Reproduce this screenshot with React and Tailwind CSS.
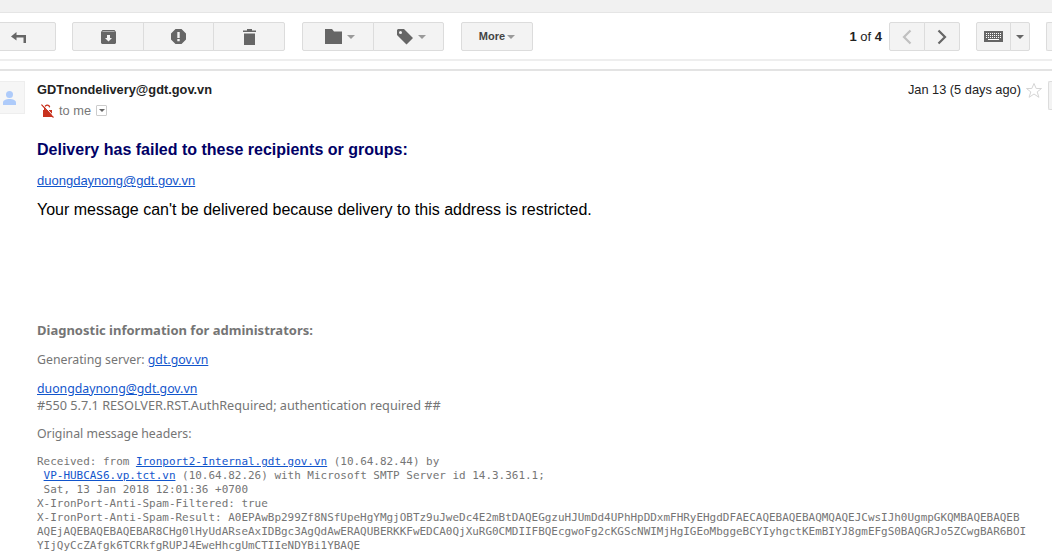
const BTN = 'flex h-[29px] items-center justify-center border border-[#dcdcdc] bg-[#f3f3f3]'
const ICON = '#666666'

function Caret({ color = '#9a9a9a', gap = 'ml-[5px]' }) {
  return <span className={`${gap} h-0 w-0 border-x-[4px] border-t-[4px] border-x-transparent`} style={{ borderTopColor: color }} />
}

function Reply() {
  return (
    <svg width="15" height="12" viewBox="0 0 15 12" fill={ICON}>
      <path d="M0 5.500 5.500 1v3H15v8h-2.500V6.500H5.500v3z" />
    </svg>
  )
}

function Archive() {
  return (
    <svg width="15" height="14" viewBox="0 0 15 14" fill={ICON}>
      <path fillRule="evenodd" d="M1.500 0h12L15 2v11l-1 1H1l-1-1V2zM1.500 2h12v-.6h-12zM6 5v3H4l3.500 3.500L11 8H9V5z" />
    </svg>
  )
}

function Spam() {
  return (
    <svg width="15" height="15" viewBox="0 0 15 15" fill={ICON}>
      <path fillRule="evenodd" d="M4.500 0h6L15 4.500v6L10.500 15h-6L0 10.500v-6zM6.300 3v6h2.400V3zM6.300 10v2.200h2.400V10z" />
    </svg>
  )
}

function Trash() {
  return (
    <svg width="13" height="16" viewBox="0 0 13 16" fill={ICON}>
      <path d="M4 0h5v1.500h4V3H0V1.500h4zM1 4.500h11V16H1z" />
    </svg>
  )
}

function Folder() {
  return (
    <svg width="17" height="15" viewBox="0 0 17 15" fill={ICON}>
      <path d="M0 0h7l2 2.500h8V15H0z" />
    </svg>
  )
}

function Tag() {
  return (
    <svg width="16" height="16" viewBox="0 0 16 16" fill={ICON}>
      <path fillRule="evenodd" d="M1 0h6l9 9-6.500 6.500L0 6V1zM3.500 2A1.500 1.500 0 1 0 3.500 5 1.500 1.500 0 0 0 3.500 2z" />
    </svg>
  )
}

function Keyboard() {
  const keys = []
  for (let y = 2; y <= 6; y += 2) {
    for (let x = 2; x <= 16; x += 2) keys.push(<rect key={`${x}-${y}`} x={x} y={y} width="1" height="1" fill="#fff" />)
  }
  return (
    <svg width="19" height="11" viewBox="0 0 19 11" fill={ICON}>
      <rect width="19" height="11" />
      {keys}
      <rect x="4" y="8" width="11" height="1" fill="#fff" />
    </svg>
  )
}

function Person() {
  return (
    <svg width="13" height="14" viewBox="0 0 13 14" fill="#aecbfa">
      <circle cx="6.500" cy="3.500" r="3.500" />
      <path d="M0 14v-2.500C0 9.500 3 8 6.500 8S13 9.500 13 11.500V14z" />
    </svg>
  )
}

function NoLock() {
  return (
    <svg width="13" height="14" viewBox="0 0 13 14" className="shrink-0">
      <path fill="#c8321f" d="M3 6V3.500a3.300 3.300 0 0 1 6.300-1L8 4V3.500a1.700 1.700 0 0 0-3.400 0V6H11v7H2V6z" />
      <path stroke="#c8321f" strokeWidth="1.200" d="M.5.500 12.500 13.500" />
      <path stroke="#fff" strokeWidth="1" d="M1.500 0 13 12.500" />
    </svg>
  )
}

function Link({ children }) {
  return <a className="text-[#1155cc] underline">{children}</a>
}

export default function App() {
  return (
    <div className="h-[555px] w-[1052px] overflow-hidden bg-white font-['Liberation_Sans',sans-serif]">
      <div className="h-[13px] border-b border-[#e5e5e5] bg-[#f1f1f1]" />

      <div className="flex h-[48px] border-b-2 border-[#eeeeee] pt-[9px]">
        <div className={`${BTN} -ml-[5px] w-[61px] rounded-[2px] pr-[14px]`}><Reply /></div>

        <div className="ml-4 flex">
          <div className={`${BTN} w-[72px] rounded-l-[2px]`}><Archive /></div>
          <div className={`${BTN} -ml-px w-[71px]`}><Spam /></div>
          <div className={`${BTN} -ml-px w-[72px] rounded-r-[2px]`}><Trash /></div>
        </div>

        <div className="ml-[17px] flex">
          <div className={`${BTN} w-[72px] rounded-l-[2px] pl-[4px]`}><Folder /><Caret /></div>
          <div className={`${BTN} -ml-px w-[71px] rounded-r-[2px] pl-[5px]`}><Tag /><Caret /></div>
        </div>

        <div className={`${BTN} ml-[17px] w-[72px] rounded-[2px] text-[11px] font-bold text-[#444444]`}>
          More<Caret gap="ml-[2px]" />
        </div>

        <div className="mr-[7px] ml-auto flex h-[29px] items-center text-[13px] text-[#222222]"><span><b>1</b> of <b>4</b></span></div>

        <div className="flex">
          <div className={`${BTN} w-[36px] rounded-l-[2px]`}>
            <svg width="10" height="16" viewBox="0 0 10 16" fill="none" stroke="#c0c0c0" strokeWidth="2.200"><path d="M8.500 1.500 2 8l6.500 6.500" /></svg>
          </div>
          <div className={`${BTN} -ml-px w-[36px] rounded-r-[2px]`}>
            <svg width="10" height="16" viewBox="0 0 10 16" fill="none" stroke="#666666" strokeWidth="2.200"><path d="M1.500 1.500 8 8l-6.500 6.500" /></svg>
          </div>
        </div>

        <div className="ml-4 flex">
          <div className={`${BTN} w-[35px] rounded-l-[2px]`}><Keyboard /></div>
          <div className={`${BTN} -ml-px w-[20px] rounded-r-[2px]`}><Caret color="#666666" gap="ml-0" /></div>
        </div>

        <div className={`${BTN} ml-4 w-[6px] shrink-0 rounded-l-[2px] border-r-0`} />
      </div>

      <div className="mt-[8px] border-t-2 border-[#e3e3e3]" />

      <div className="mt-[10px] flex items-start">
        <div className="flex h-[33px] w-[25px] items-center justify-center border border-l-0 border-[#eeeeee] bg-[#f6f6f6] pr-[6px]"><Person /></div>
        <div className="ml-3 flex-1">
          <div className="text-[12.800px] leading-[18px] font-bold text-[#222222]">GDTnondelivery@gdt.gov.vn</div>
          <div className="mt-[2px] flex items-center pl-1 text-[12.800px] text-[#777777]">
            <NoLock />
            <span className="ml-[5px]">to me</span>
            <span className="ml-[5px] flex h-[11px] w-[11px] items-center justify-center rounded-[1px] border border-[#cccccc]">
              <span className="h-0 w-0 border-x-[3px] border-t-[3px] border-x-transparent border-t-[#666666]" />
            </span>
          </div>
        </div>
        <div className="flex items-center text-[12.800px] leading-[18px] text-[#222222]">
          Jan 13 (5 days ago)
          <svg width="18" height="17" viewBox="0 0 18 17" className="ml-[4px]" fill="none" stroke="#d5d5d5">
            <path d="m9 1.500 2.200 5h5.300l-4.300 3.400 1.700 5.400L9 12l-4.900 3.300 1.700-5.400L1.500 6.500h5.300z" />
          </svg>
        </div>
        <div className="ml-[5px] h-[29px] w-[4px] shrink-0 rounded-l-[2px] border border-r-0 border-[#dcdcdc] bg-[#f3f3f3]" />
      </div>

      <div className="pl-[37px]">
        <div className="mt-[21px] text-[16px] leading-[18px] font-bold text-[#000066]">Delivery has failed to these recipients or groups:</div>
        <div className="mt-[14px] text-[13px] leading-[15px]"><Link>duongdaynong@gdt.gov.vn</Link></div>
        <div className="mt-[13px] text-[16px] leading-[18px] text-black">Your message can't be delivered because delivery to this address is restricted.</div>

        <div className="mt-[103px] font-['Noto_Sans',sans-serif] text-[12.300px] leading-[16px] text-[#757575]">
          <div className="text-[13px] font-bold">Diagnostic information for administrators:</div>
          <div className="mt-[14px]">Generating server: <Link>gdt.gov.vn</Link></div>
          <div className="mt-[13px]"><Link>duongdaynong@gdt.gov.vn</Link></div>
          <div className="text-[12.700px]">#550 5.7.1 RESOLVER.RST.AuthRequired; authentication required ##</div>
          <div className="mt-[13px]">Original message headers:</div>
        </div>

        <div className="mt-[13px] font-['DejaVu_Sans_Mono',monospace] text-[10.960px] leading-[14px] whitespace-pre text-[#757575]">
          <div>Received: from <Link>Ironport2-Internal.gdt.gov.vn</Link> (10.64.82.44) by</div>
          <div className="pl-[6.600px]"><Link>VP-HUBCAS6.vp.tct.vn</Link> (10.64.82.26) with Microsoft SMTP Server id 14.3.361.1;</div>
          <div className="pl-[6.600px]">Sat, 13 Jan 2018 12:01:36 +0700</div>
          <div>X-IronPort-Anti-Spam-Filtered: true</div>
          <div>X-IronPort-Anti-Spam-Result: A0EPAwBp299Zf8NSfUpeHgYMgjOBTz9uJweDc4E2mBtDAQEGgzuHJUmDd4UPhHpDDxmFHRyEHgdDFAECAQEBAQEBAQMQAQEJCwsIJh0UgmpGKQMBAQEBAQEB</div>
          <div>AQEjAQEBAQEBAQEBAR8CHg0lHyUdARseAxIDBgc3AgQdAwERAQUBERKKFwEDCA0QjXuRG0CMDIIFBQEcgwoFg2cKGScNWIMjHgIGEoMbggeBCYIyhgctKEmBIYJ8gmEFgS0BAQGRJo5ZCwgBAR6BOI</div>
          <div>YIjQyCcZAfgk6TCRkfgRUPJ4EweHhcgUmCTIIeNDYBi1YBAQE</div>
        </div>
      </div>

      <div className="mt-[2px] ml-auto w-[189px] border-t border-[#333333]" />
    </div>
  )
}
